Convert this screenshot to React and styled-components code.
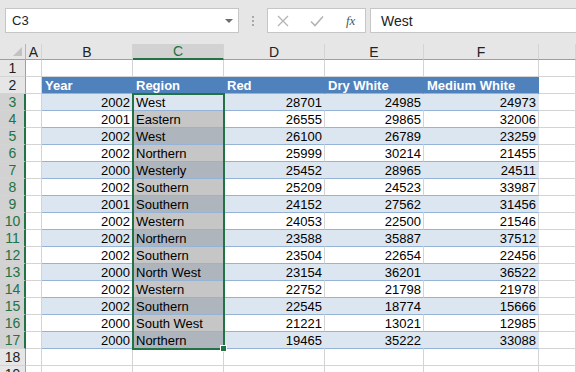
import React from 'react'
import styled, { createGlobalStyle, css } from 'styled-components'

const GlobalStyle = createGlobalStyle`
  body {
    margin: 0;
    background: #e6e6e6;
    font-family: "Liberation Sans", Arial, sans-serif;
    overflow: hidden;
  }
`

const green = '#217346'
const grid = '#d4d4d4'

const Page = styled.div`
  width: 576px;
  height: 372px;
  overflow: hidden;
  background: #e6e6e6;
`

const TopBar = styled.div`
  height: 44px;
  box-sizing: border-box;
  padding: 8px 0 0 5px;
  display: flex;
  align-items: flex-start;
`

const NameBox = styled.div`
  width: 234px;
  height: 25px;
  box-sizing: border-box;
  border: 1px solid #c6c6c6;
  background: #fff;
  display: flex;
  align-items: center;
  justify-content: space-between;
  padding: 0 5px 0 6px;
  font-size: 13px;
  color: #222;
`

const Arrow = styled.span`
  width: 0;
  height: 0;
  border-left: 4px solid transparent;
  border-right: 4px solid transparent;
  border-top: 4px solid #6d6d6d;
  margin-top: 1px;
`

const Dots = styled.div`
  width: 28px;
  height: 25px;
  display: flex;
  flex-direction: column;
  align-items: center;
  justify-content: center;
  gap: 2px;
  span {
    width: 2px;
    height: 2px;
    background: #a8a8a8;
  }
`

const FxBox = styled.div`
  width: 99px;
  height: 25px;
  box-sizing: border-box;
  border: 1px solid #c6c6c6;
  background: #fff;
  display: flex;
  align-items: center;
  padding-left: 9px;
  gap: 21px;
`

const Fx = styled.i`
  font-family: "Liberation Serif", "Times New Roman", serif;
  font-size: 13px;
  color: #555;
  margin-left: 1px;
`

const FormulaInput = styled.div`
  flex: 1;
  margin-left: 4px;
  height: 25px;
  box-sizing: border-box;
  border: 1px solid #c6c6c6;
  border-right: none;
  background: #fff;
  display: flex;
  align-items: center;
  padding-left: 10px;
  font-size: 14px;
  color: #222;
`

const Sheet = styled.div`
  position: relative;
  display: grid;
  grid-template-columns: 26px 16px 91px 91px 101px 99px 115px 1fr;
  grid-template-rows: 16px;
  grid-auto-rows: 17px;
`

const Corner = styled.div`
  box-sizing: border-box;
  border-right: 1px solid #b5b5b5;
  border-bottom: 1px solid #9e9e9e;
  position: relative;
  &::after {
    content: '';
    position: absolute;
    right: 3px;
    bottom: 3px;
    border-left: 9px solid transparent;
    border-bottom: 9px solid #c2c2c2;
  }
`

const ColHead = styled.div`
  box-sizing: border-box;
  border-right: 1px solid ${grid};
  border-bottom: 1px solid #9e9e9e;
  display: flex;
  align-items: center;
  justify-content: center;
  font-size: 14px;
  color: #222;
  ${p => p.$sel && css`
    background: #d2d2d2;
    color: ${green};
    border-bottom: 2px solid ${green};
  `}
`

const RowHead = styled.div`
  box-sizing: border-box;
  border-right: 1px solid #9e9e9e;
  border-bottom: 1px solid ${grid};
  display: flex;
  align-items: center;
  justify-content: center;
  font-size: 14px;
  color: #222;
  ${p => p.$sel && css`
    background: #d2d2d2;
    color: ${green};
    border-right: 2px solid ${green};
    padding-left: 1px;
  `}
`

const bgFor = p => {
  if (p.$kind === 'head') return '#4f81bd'
  if (p.$kind === 'band') return p.$sel ? '#aeb5bd' : '#dce6f1'
  return p.$sel ? '#c6c6c6' : '#fff'
}

const Cell = styled.div`
  box-sizing: border-box;
  background: ${bgFor};
  border-right: 1px solid ${p => (p.$kind === 'band' || p.$kind === 'head' ? bgFor(p) : grid)};
  border-bottom: 1px solid ${p => (p.$kind ? '#95b3d7' : grid)};
  display: flex;
  align-items: center;
  justify-content: ${p => (p.$num ? 'flex-end' : 'flex-start')};
  padding: 0 2px 0 3px;
  font-size: 13px;
  white-space: nowrap;
  overflow: hidden;
  color: #000;
  ${p => p.$kind === 'head' && css`
    color: #fff;
    font-weight: bold;
  `}
`

const Selection = styled.div`
  position: absolute;
  left: 132px;
  top: 49px;
  width: 93px;
  height: 257px;
  box-sizing: border-box;
  border: 2px solid ${green};
  pointer-events: none;
`

const FillHandle = styled.div`
  position: absolute;
  right: -4px;
  bottom: -4px;
  width: 5px;
  height: 5px;
  background: ${green};
  border: 1px solid #fff;
`

const rows = [
  [2002, 'West', 28701, 24985, 24973],
  [2001, 'Eastern', 26555, 29865, 32006],
  [2002, 'West', 26100, 26789, 23259],
  [2002, 'Northern', 25999, 30214, 21455],
  [2000, 'Westerly', 25452, 28965, 24511],
  [2002, 'Southern', 25209, 24523, 33987],
  [2001, 'Southern', 24152, 27562, 31456],
  [2002, 'Western', 24053, 22500, 21546],
  [2002, 'Northern', 23588, 35887, 37512],
  [2002, 'Southern', 23504, 22654, 22456],
  [2000, 'North West', 23154, 36201, 36522],
  [2002, 'Western', 22752, 21798, 21978],
  [2002, 'Southern', 22545, 18774, 15666],
  [2000, 'South West', 21221, 13021, 12985],
  [2000, 'Northern', 19465, 35222, 33088],
]

const letters = ['A', 'B', 'C', 'D', 'E', 'F', '']

const CrossIcon = () => (
  <svg width="12" height="12" viewBox="0 0 12 12">
    <path d="M1 1 L11 11 M11 1 L1 11" stroke="#b4b4b4" strokeWidth="1.3" fill="none" />
  </svg>
)

const CheckIcon = () => (
  <svg width="14" height="12" viewBox="0 0 14 12">
    <path d="M1 6.5 L5 10.5 L13 1.5" stroke="#b4b4b4" strokeWidth="1.6" fill="none" />
  </svg>
)

const EmptyRow = ({ n }) => (
  <>
    <RowHead>{n}</RowHead>
    {letters.map((l, i) => <Cell key={i} />)}
  </>
)

const App = () => {
  return (
    <Page>
      <GlobalStyle />
      <TopBar>
        <NameBox>
          C3
          <Arrow />
        </NameBox>
        <Dots><span /><span /><span /></Dots>
        <FxBox>
          <CrossIcon />
          <CheckIcon />
          <Fx>fx</Fx>
        </FxBox>
        <FormulaInput>West</FormulaInput>
      </TopBar>
      <Sheet>
        <Corner />
        {letters.map((l, i) => (
          <ColHead key={i} $sel={l === 'C'}>{l}</ColHead>
        ))}

        <EmptyRow n={1} />

        <RowHead>2</RowHead>
        <Cell />
        {['Year', 'Region', 'Red', 'Dry White', 'Medium White'].map(h => (
          <Cell key={h} $kind="head">{h}</Cell>
        ))}
        <Cell />

        {rows.map((r, i) => {
          const kind = i % 2 === 0 ? 'band' : 'white'
          return (
            <React.Fragment key={i}>
              <RowHead $sel>{i + 3}</RowHead>
              <Cell />
              <Cell $kind={kind} $num>{r[0]}</Cell>
              <Cell $kind={kind} $sel={i > 0}>{r[1]}</Cell>
              <Cell $kind={kind} $num>{r[2]}</Cell>
              <Cell $kind={kind} $num>{r[3]}</Cell>
              <Cell $kind={kind} $num>{r[4]}</Cell>
              <Cell />
            </React.Fragment>
          )
        })}

        <EmptyRow n={18} />
        <EmptyRow n={19} />

        <Selection>
          <FillHandle />
        </Selection>
      </Sheet>
    </Page>
  )
}

export default App
